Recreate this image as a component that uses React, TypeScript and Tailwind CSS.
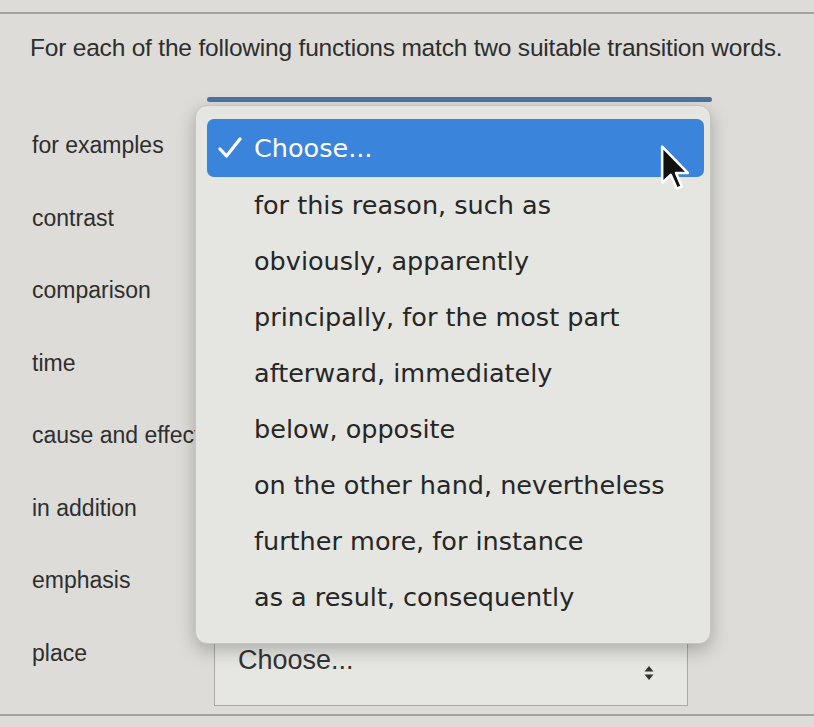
import React from "react";

const labels = [
  "for examples",
  "contrast",
  "comparison",
  "time",
  "cause and effect",
  "in addition",
  "emphasis",
  "place",
];

const options = [
  "for this reason, such as",
  "obviously, apparently",
  "principally, for the most part",
  "afterward, immediately",
  "below, opposite",
  "on the other hand, nevertheless",
  "further more, for instance",
  "as a result, consequently",
];

function UpDown() {
  return (
    <svg width="10" height="16" viewBox="0 0 10 16" className="text-[#333]">
      <path d="M5 1 L9.5 6.5 H0.5 Z" fill="currentColor" />
      <path d="M5 15 L9.5 9.5 H0.5 Z" fill="currentColor" />
    </svg>
  );
}

function Cursor() {
  return (
    <svg width="30" height="48" viewBox="-1 -1 14 22">
      <path
        d="M0 0 L0 17 L4 13.2 L6.8 19.6 L9.2 18.6 L6.5 12.3 L12 12.3 Z"
        fill="#111"
        stroke="#fff"
        strokeWidth="1.2"
        strokeLinejoin="round"
      />
    </svg>
  );
}

export default function App() {
  return (
    <div className="relative w-[814px] h-[727px] overflow-hidden bg-[#dddcd8] font-['Liberation_Sans',Arial,sans-serif] text-[#2e2e2e]">
      <div className="h-[14px] border-b-2 border-[#a3a3a0]" />

      <h1 className="pl-[30px] pt-[20px] text-[24.5px] leading-[28px] tracking-[-0.2px] whitespace-nowrap">
        For each of the following functions match two suitable transition words.
      </h1>

      <div className="mt-[47px]">
        {labels.map((label, i) => (
          <div key={label} className="flex h-[72.5px] items-start">
            <div className="w-[214px] shrink-0 pl-[32px] pt-[24px] text-[23px] leading-[24px] whitespace-nowrap">
              {label}
            </div>
            <div className="mt-[23px] flex h-[66px] w-[474px] shrink-0 items-center justify-between border border-[#a9a9a6] bg-[#e6e6e3] pl-[23px] pr-[33px]">
              {/* the rows under the open list keep their box, their text is covered */}
              <span
                className={
                  i === labels.length - 1
                    ? "-mt-[26px] text-[27px] leading-[28px] text-[#333]"
                    : "invisible -mt-[26px] text-[27px] leading-[28px] text-[#333]"
                }
              >
                Choose...
              </span>
              <UpDown />
            </div>
          </div>
        ))}
      </div>

      <div className="mt-[25px] border-t-2 border-[#a3a3a0]" />

      {/* focus ring of the open select */}
      <div className="absolute left-[207px] top-[97px] h-[5px] w-[505px] rounded-sm bg-[#4d74a0]" />

      {/* open option list */}
      <div className="absolute left-[195px] top-[105px] w-[516px] rounded-[12px] border border-[#c4c4c1] bg-[#e5e5e2] pt-[13px] pb-[18px] font-['DejaVu_Sans',sans-serif] shadow-[0_6px_18px_rgba(0,0,0,0.25)]">
        <div className="ml-[11px] mr-[6px] flex h-[58px] items-center rounded-[7px] bg-[#3a84dc] text-white">
          <svg width="24" height="22" viewBox="0 0 24 22" className="ml-[11px] mr-[12px]">
            <path
              d="M2 12 L8.5 19 L22 2"
              fill="none"
              stroke="#fff"
              strokeWidth="3.2"
              strokeLinecap="round"
              strokeLinejoin="round"
            />
          </svg>
          <span className="text-[25.5px] leading-[30px]">Choose...</span>
        </div>
        {options.map((o) => (
          <div
            key={o}
            className="flex h-[56px] items-center pl-[58px] text-[25.5px] leading-[30px] text-[#262626] whitespace-nowrap"
          >
            {o}
          </div>
        ))}
      </div>

      <div className="absolute left-[660px] top-[144px]">
        <Cursor />
      </div>
    </div>
  );
}
